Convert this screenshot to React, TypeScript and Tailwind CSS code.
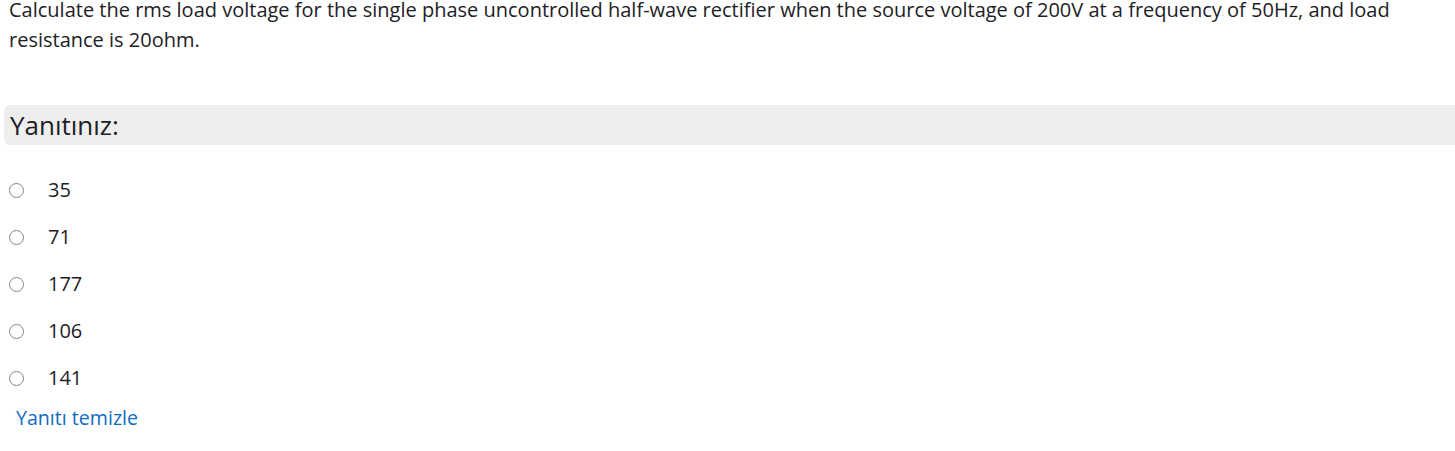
import React from "react";

const options = ["35", "71", "177", "106", "141"];

export default function App() {
  return (
    <div className="w-[1455px] h-[451px] bg-white text-[#1d2125] overflow-hidden" style={{ fontFamily: '"Open Sans", "Noto Sans", sans-serif' }}>
      <div className="-mt-[5px] pl-[9px] pr-4 text-[20px] leading-[30px]">
        Calculate the rms load voltage for the single phase uncontrolled half-wave rectifier when the source voltage of 200V at a frequency of 50Hz, and load resistance is 20ohm.
      </div>
      <div className="mt-[50px] ml-[4px] h-[40px] bg-[#eeeeee] rounded-l-[6px] flex items-center pl-[6px] text-[26px] text-[#1d2125]">
        Yanıtınız:
      </div>
      <div className="mt-[30px] flex flex-col gap-[17px]">
        {options.map((o) => (
          <label key={o} className="flex items-center h-[30px] pl-[9px] text-[20px]">
            <span className="w-[15px] h-[15px] rounded-full border border-[#858585] bg-white"></span>
            <span className="ml-[24px]">{o}</span>
          </label>
        ))}
      </div>
      <div className="mt-[10px] pl-[16px] text-[19.6px] text-[#0f6cbf]">Yanıtı temizle</div>
    </div>
  );
}
